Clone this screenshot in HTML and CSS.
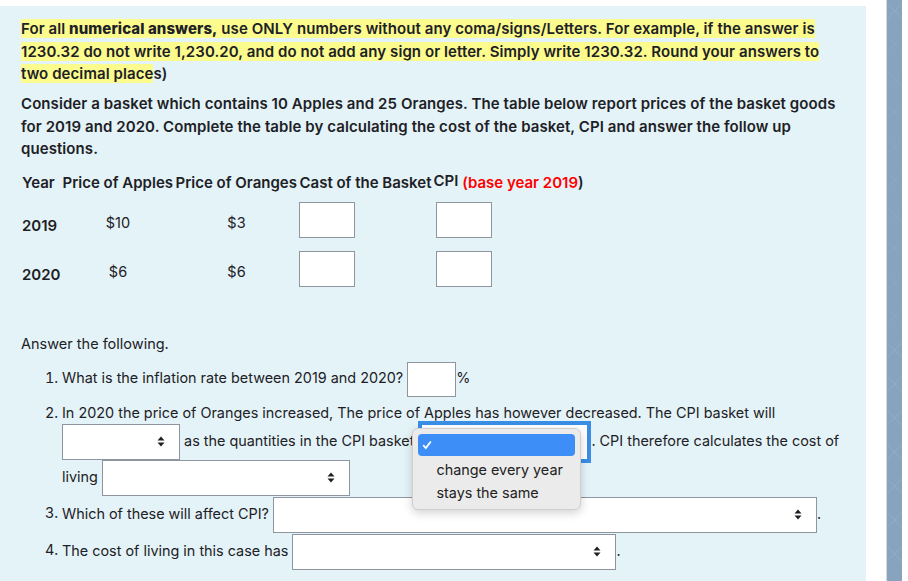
FILE: index.html
```html
<!DOCTYPE html>
<html lang="en">
<head>
    <meta charset="UTF-8">
    <meta name="viewport" content="width=device-width, initial-scale=1.0">
    <title>CPI Basket Question</title>
    <link rel="stylesheet" href="styles.css">
</head>
<body>
    <div class="page">
        <div class="formulation">
            <p class="notice"><mark>For all <strong>numerical answers,</strong> use ONLY numbers without any coma/signs/Letters. For example, if the answer is 1230.32 do not write 1,230.20, and do not add any sign or letter. Simply write 1230.32. Round your answers to two decimal place</mark>s)</p>
            <p class="intro">Consider a basket which contains 10 Apples and 25 Oranges. The table below report prices of the basket goods for 2019 and 2020. Complete the table by calculating the cost of the basket, CPI and answer the follow up questions.</p>

            <table class="basket">
                <thead>
                    <tr>
                        <th class="col-year">Year</th>
                        <th class="col-apples">Price of Apples</th>
                        <th class="col-oranges">Price of Oranges</th>
                        <th class="col-cost">Cast of the Basket</th>
                        <th class="col-cpi"><span class="cpi-label">CPI</span> <span class="base-year">(base year 2019</span>)</th>
                    </tr>
                </thead>
                <tbody>
                    <tr>
                        <td class="year">2019</td>
                        <td class="price">$10</td>
                        <td class="price">$3</td>
                        <td><span class="answer-box"></span></td>
                        <td class="cpi-cell"><span class="answer-box"></span></td>
                    </tr>
                    <tr>
                        <td class="year">2020</td>
                        <td class="price">$6</td>
                        <td class="price">$6</td>
                        <td><span class="answer-box"></span></td>
                        <td class="cpi-cell"><span class="answer-box"></span></td>
                    </tr>
                </tbody>
            </table>

            <p class="lead">Answer the following.</p>
            <ol class="questions">
                <li>What is the inflation rate between 2019 and 2020? <span class="answer-box small"></span>%</li>
                <li>In 2020 the price of Oranges increased, The price of Apples has however decreased. The CPI basket will
                    <span class="select-box w-118"><svg class="arrows" width="8" height="11" viewBox="0 0 8 11"><path d="M4 0.5 L7.5 4.5 H0.5 Z M4 10.5 L7.5 6.5 H0.5 Z"/></svg></span>
                    as the quantities in the CPI basket
                    <span class="select-box w-167 focused">
                        <span class="menu">
                            <span class="menu-item selected"><svg class="check" width="10" height="10" viewBox="0 0 10 10"><path d="M1.2 5.2 L3.8 8 L8.8 1.5"/></svg></span>
                            <span class="menu-item">change every year</span>
                            <span class="menu-item">stays the same</span>
                        </span>
                    </span>. CPI therefore calculates the cost of living
                    <span class="select-box w-248"><svg class="arrows" width="8" height="11" viewBox="0 0 8 11"><path d="M4 0.5 L7.5 4.5 H0.5 Z M4 10.5 L7.5 6.5 H0.5 Z"/></svg></span>
                </li>
                <li>Which of these will affect CPI? <span class="select-box w-544"><svg class="arrows" width="8" height="11" viewBox="0 0 8 11"><path d="M4 0.5 L7.5 4.5 H0.5 Z M4 10.5 L7.5 6.5 H0.5 Z"/></svg></span>.</li>
                <li>The cost of living in this case has <span class="select-box w-324"><svg class="arrows" width="8" height="11" viewBox="0 0 8 11"><path d="M4 0.5 L7.5 4.5 H0.5 Z M4 10.5 L7.5 6.5 H0.5 Z"/></svg></span>.</li>
            </ol>
        </div>
        <div class="gutter"></div>
        <div class="sidebar"></div>
    </div>
</body>
</html>
```

FILE: styles.css
```css
* {
    margin: 0;
    padding: 0;
    box-sizing: border-box;
}

body {
    font-family: Inter, 'Noto Sans', sans-serif;
    color: #1d2125;
    background: #fff;
}

.page {
    display: flex;
    height: 581px;
    overflow: hidden;
}

.formulation {
    width: 866px;
    flex-shrink: 0;
    margin-top: 6px;
    padding: 12px 21px 0 21px;
    background: #e4f3f8;
    font-size: 14.5px;
    line-height: 22.5px;
}

.gutter {
    width: 20px;
    flex-shrink: 0;
}

.sidebar {
    width: 16px;
    flex-shrink: 0;
    background: #87a3bd;
    border-left: 1px solid #d5d9dd;
    background-image:
        repeating-linear-gradient(45deg, rgba(255,255,255,0.06) 0 1px, transparent 1px 24px),
        repeating-linear-gradient(-45deg, rgba(255,255,255,0.06) 0 1px, transparent 1px 24px);
}

/* intro text */

.notice,
.intro {
    font-size: 15px;
    font-weight: 600;
    letter-spacing: 0.08px;
}

.notice {
    margin-bottom: 7.5px;
}

.notice mark {
    background: #fbfb8e;
    color: inherit;
}

.notice strong {
    font-weight: 800;
}

/* table */

.basket {
    border-collapse: collapse;
    margin-top: 9.5px;
}

.basket th {
    font-size: 15px;
    font-weight: 600;
    text-align: left;
    padding: 2px 1px;
    white-space: nowrap;
}

.col-year { width: 40px; }
.col-apples { width: 113px; }
.col-oranges { width: 124px; }
.col-cost { width: 134px; }
.col-cpi { width: 160px; }

.cpi-label {
    position: relative;
    top: -2px;
}

.base-year {
    color: #f00;
}

.basket td {
    padding: 5px 1px 8px;
    vertical-align: middle;
    height: 49px;
}

.basket td.year {
    font-size: 15px;
    font-weight: 600;
    padding-top: 17px;
}

.basket td.price {
    font-weight: 400;
    text-align: center;
    padding-top: 15px;
    padding-bottom: 12px;
    font-size: 14.5px;
}

.basket td.cpi-cell {
    padding-left: 4px;
}

.answer-box {
    display: inline-block;
    width: 56px;
    height: 36px;
    background: #fff;
    border: 1px solid #8f959e;
    vertical-align: middle;
}

.answer-box.small {
    width: 49px;
    height: 35px;
}

/* questions */

.lead {
    margin-top: 37px;
    font-size: 14.5px;
    line-height: 22px;
}

.questions {
    margin-top: 7px;
    padding-left: 41px;
    font-size: 14.4px;
    line-height: 22px;
}

.questions li {
    margin-bottom: 1px;
}

.questions li:first-child {
    margin-bottom: 5px;
}

.select-box {
    display: inline-flex;
    align-items: center;
    justify-content: flex-end;
    height: 36px;
    padding-right: 14px;
    background: #fff;
    border: 1px solid #8f959e;
    vertical-align: middle;
    position: relative;
}

.select-box.focused {
    outline: 3px solid #3a8ee6;
    border-color: #3a8ee6;
    margin: 0 3px;
}

.arrows {
    fill: #1d2125;
}

.w-118 { width: 118px; }
.w-167 { width: 167px; }
.w-248 { width: 248px; }
.w-544 { width: 544px; }
.w-324 { width: 324px; }

/* open dropdown */

.menu {
    position: absolute;
    left: -10px;
    top: 3px;
    width: 169px;
    padding: 5px;
    display: flex;
    flex-direction: column;
    background: #ebebeb;
    border: 1px solid #cfcfcf;
    border-radius: 6px;
    box-shadow: 0 3px 10px rgba(0,0,0,0.18);
    z-index: 5;
}

.menu-item {
    display: flex;
    align-items: center;
    height: 24px;
    padding-left: 18px;
    font-size: 14.4px;
    color: #222;
    white-space: nowrap;
}

.menu-item:last-child {
    height: 22px;
}

.menu-item.selected {
    height: 22px;
    margin-bottom: 2px;
    padding-left: 4px;
    background: #3d8ef7;
    border-radius: 4px;
}

.check {
    fill: none;
    stroke: #fff;
    stroke-width: 1.8;
}
```
